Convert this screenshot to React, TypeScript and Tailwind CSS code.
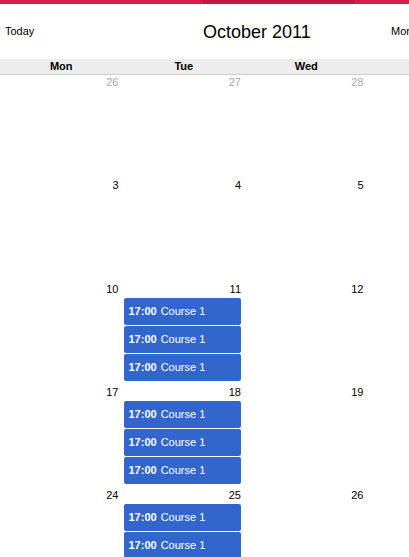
import React from 'react';

type Day = { date: number; inMonth: boolean };

const weekdays = ['Mon', 'Tue', 'Wed', 'Thu', 'Fri', 'Sat', 'Sun'];

// 2011年10月，周一开头
function buildWeeks(): Day[][] {
  const weeks: Day[][] = [];
  const start = new Date(2011, 8, 26);
  for (let w = 0; w < 6; w++) {
    const row: Day[] = [];
    for (let d = 0; d < 7; d++) {
      const cur = new Date(start);
      cur.setDate(start.getDate() + w * 7 + d);
      row.push({ date: cur.getDate(), inMonth: cur.getMonth() === 9 });
    }
    weeks.push(row);
  }
  return weeks;
}

const courseDays = new Set([11, 18, 25]);

function EventChip() {
  return (
    <div className="h-[27px] ml-px mr-1 mb-px flex items-center gap-1 px-[5px] rounded-[2px] bg-[#3366cc] text-white text-[11px] leading-none">
      <span className="font-bold">17:00</span>
      <span>Course 1</span>
    </div>
  );
}

export default function App() {
  const weeks = buildWeeks();

  return (
    <div className="w-screen h-screen overflow-hidden bg-white font-['Liberation_Sans',Arial,sans-serif] text-black">
      <div className="w-[857.5px]">
        {/* 顶部色条 */}
        <div className="flex h-[4px]">
          <div className="w-[203px] bg-[#d81f47]" />
          <div className="w-[152px] bg-[#c1193f]" />
          <div className="flex-1 bg-[#d81f47]" />
        </div>

        {/* 工具栏 */}
        <div className="flex items-center h-[55px]">
          <div className="w-[203px] pl-[5px] text-[11px]">Today</div>
          <h2 className="w-[188px] text-[18px] leading-none">October 2011</h2>
          <div className="flex gap-3 text-[11px]">
            <span>Month</span>
            <span>Week</span>
            <span>Day</span>
          </div>
        </div>

        {/* 星期表头 */}
        <div className="grid grid-cols-7 h-[16px] bg-[#ededed] border-b border-[#cccccc]">
          {weekdays.map((w) => (
            <div key={w} className="flex items-center justify-center text-[11px] font-bold leading-none">
              {w}
            </div>
          ))}
        </div>

        {/* 月视图 */}
        {weeks.map((row, i) => (
          <div key={i} className="grid grid-cols-7 h-[103.3px]">
            {row.map((day, j) => (
              <div key={j} className="flex flex-col">
                <div
                  className={`h-[16px] pt-px pr-1 text-right text-[11px] leading-[13px] ${
                    day.inMonth ? 'text-black' : 'text-[#aaaaaa]'
                  }`}
                >
                  {day.date}
                </div>
                {day.inMonth && j === 1 && courseDays.has(day.date) && (
                  <>
                    <EventChip />
                    <EventChip />
                    <EventChip />
                  </>
                )}
              </div>
            ))}
          </div>
        ))}
      </div>
    </div>
  );
}
